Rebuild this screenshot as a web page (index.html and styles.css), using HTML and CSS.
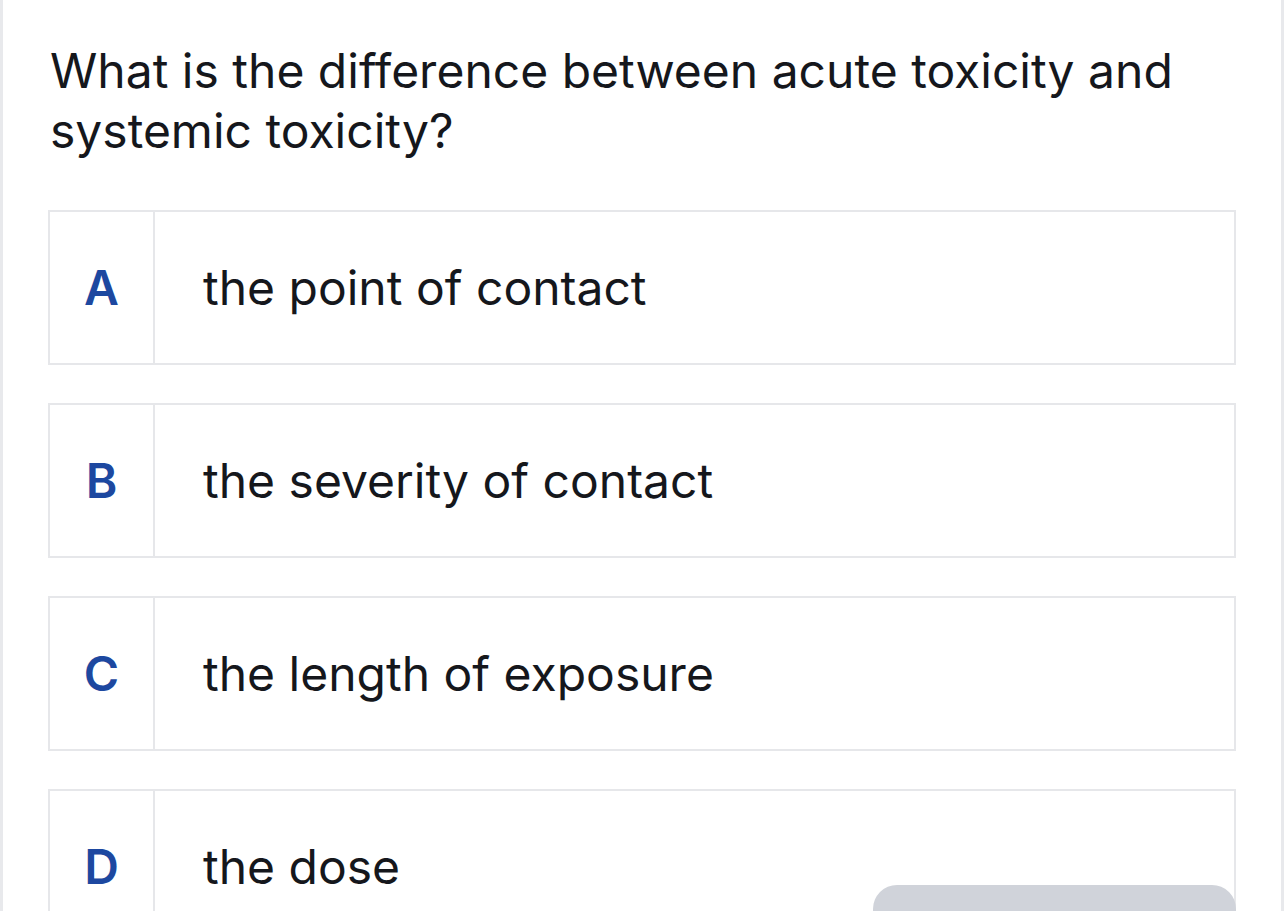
FILE: index.html
```html
<!DOCTYPE html>
<html lang="en">
<head>
<meta charset="utf-8">
<title>Question</title>
<link rel="stylesheet" href="styles.css">
</head>
<body>
<main class="page">
  <h1 class="question">What is the difference between acute toxicity and systemic toxicity?</h1>
  <ul class="options">
    <li class="option"><span class="letter">A</span><span class="answer">the point of contact</span></li>
    <li class="option"><span class="letter">B</span><span class="answer">the severity of contact</span></li>
    <li class="option"><span class="letter">C</span><span class="answer">the length of exposure</span></li>
    <li class="option"><span class="letter">D</span><span class="answer">the dose</span></li>
  </ul>
  <div class="floating-button" aria-hidden="true"></div>
</main>
</body>
</html>
```
FILE: styles.css
```css
html, body {
  margin: 0;
  padding: 0;
  background: #ffffff;
  overflow: hidden;
}
body {
  font-family: Inter, "Noto Sans", "Liberation Sans", sans-serif;
  color: #15171c;
}
.page {
  box-sizing: border-box;
  min-height: 911px;
  border-left: 3px solid #e8e9ec;
  border-right: 3px solid #e8e9ec;
  padding: 41px 45px 0 45px;
}
.question {
  margin: 0 0 49px 2px;
  font-size: 48px;
  line-height: 60px;
  font-weight: 400;
  letter-spacing: 0;
}
.options {
  list-style: none;
  margin: 0;
  padding: 0;
  display: flex;
  flex-direction: column;
  gap: 38px;
}
.option {
  box-sizing: border-box;
  height: 155px;
  border: 2px solid #e6e7ea;
  display: flex;
  align-items: stretch;
}
.letter {
  width: 103px;
  flex: none;
  border-right: 2px solid #e6e7ea;
  display: flex;
  align-items: center;
  justify-content: center;
  font-size: 48px;
  font-weight: 600;
  color: #1d48a0;
}
.answer {
  display: flex;
  align-items: center;
  padding-left: 48px;
  font-size: 48px;
  color: #15171c;
}
.floating-button {
  position: fixed;
  left: 873px;
  top: 885px;
  width: 363px;
  height: 60px;
  border-radius: 24px;
  background: #d0d3da;
}
```
